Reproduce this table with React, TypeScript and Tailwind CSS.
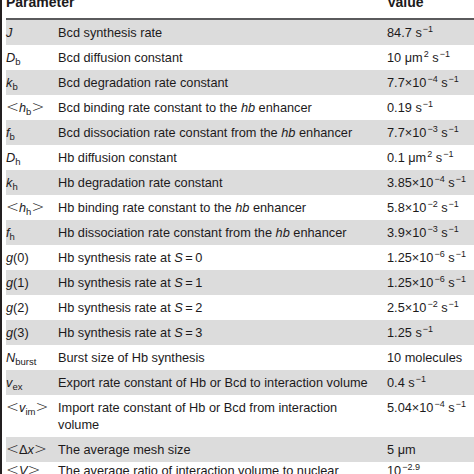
import React from "react";

const Sub = ({ children }: { children: React.ReactNode }) => (
  <span className="not-italic text-[9.5px] leading-[0] align-[-0.3em]">{children}</span>
);
const Sup = ({ children }: { children: React.ReactNode }) => (
  <span className="text-[9px] leading-[0] align-[0.6em] ml-[1px]">{children}</span>
);
const Lt = () => (
  <span className="font-['DejaVu_Sans',sans-serif] text-[15.5px] font-light not-italic leading-[0]">&lt;</span>
);
const Gt = () => (
  <span className="font-['DejaVu_Sans',sans-serif] text-[15.5px] font-light not-italic leading-[0]">&gt;</span>
);
const I = ({ children }: { children: React.ReactNode }) => <i className="italic">{children}</i>;

const sInv = (
  <>
    {" "}s<Sup>−1</Sup>
  </>
);
const pow = (base: string, exp: string) => (
  <>
    {base}×10<Sup>−{exp}</Sup>
    {sInv}
  </>
);

type Row = { sym: React.ReactNode; desc: React.ReactNode; val: React.ReactNode };

const rows: Row[] = [
  { sym: <I>J</I>, desc: "Bcd synthesis rate", val: <>84.7{sInv}</> },
  { sym: <><I>D</I><Sub>b</Sub></>, desc: "Bcd diffusion constant", val: <>10 μm<Sup>2</Sup>{sInv}</> },
  { sym: <><I>k</I><Sub>b</Sub></>, desc: "Bcd degradation rate constant", val: pow("7.7", "4") },
  {
    sym: <><Lt /><I>h</I><Sub>b</Sub><Gt /></>,
    desc: <>Bcd binding rate constant to the <I>hb</I> enhancer</>,
    val: <>0.19{sInv}</>,
  },
  {
    sym: <><I>f</I><Sub>b</Sub></>,
    desc: <>Bcd dissociation rate constant from the <I>hb</I> enhancer</>,
    val: pow("7.7", "3"),
  },
  { sym: <><I>D</I><Sub>h</Sub></>, desc: "Hb diffusion constant", val: <>0.1 μm<Sup>2</Sup>{sInv}</> },
  { sym: <><I>k</I><Sub>h</Sub></>, desc: "Hb degradation rate constant", val: pow("3.85", "4") },
  {
    sym: <><Lt /><I>h</I><Sub>h</Sub><Gt /></>,
    desc: <>Hb binding rate constant to the <I>hb</I> enhancer</>,
    val: pow("5.8", "2"),
  },
  {
    sym: <><I>f</I><Sub>h</Sub></>,
    desc: <>Hb dissociation rate constant from the <I>hb</I> enhancer</>,
    val: pow("3.9", "3"),
  },
  { sym: <><I>g</I>(0)</>, desc: <>Hb synthesis rate at <I>S</I>{"\u2009=\u2009"}0</>, val: pow("1.25", "6") },
  { sym: <><I>g</I>(1)</>, desc: <>Hb synthesis rate at <I>S</I>{"\u2009=\u2009"}1</>, val: pow("1.25", "6") },
  { sym: <><I>g</I>(2)</>, desc: <>Hb synthesis rate at <I>S</I>{"\u2009=\u2009"}2</>, val: pow("2.5", "2") },
  { sym: <><I>g</I>(3)</>, desc: <>Hb synthesis rate at <I>S</I>{"\u2009=\u2009"}3</>, val: <>1.25{sInv}</> },
  { sym: <><I>N</I><Sub>burst</Sub></>, desc: "Burst size of Hb synthesis", val: "10 molecules" },
  { sym: <><I>v</I><Sub>ex</Sub></>, desc: "Export rate constant of Hb or Bcd to interaction volume", val: <>0.4{sInv}</> },
  {
    sym: <><Lt /><I>v</I><Sub>im</Sub><Gt /></>,
    desc: "Import rate constant of Hb or Bcd from interaction volume",
    val: pow("5.04", "4"),
  },
  { sym: <><Lt />Δ<I>x</I><Gt /></>, desc: "The average mesh size", val: "5 μm" },
];

export default function App() {
  return (
    <div className="w-[474px] h-[474px] overflow-hidden bg-white border-l-2 border-[#231f20] pl-[4px] font-['Liberation_Sans',Arial,sans-serif] text-[#1c1a1b]">
      <div className="w-[520px]">
        <div className="h-[18px] flex font-bold text-[14px] leading-[17px]">
          <div className="w-[381px] -mt-[6px]">Parameter</div>
          <div className="-mt-[6px]">Value</div>
        </div>
        <div className="h-[2px] bg-[#5a5a5c]" />
        {rows.map((r, i) => (
          <div
            key={i}
            className={`flex text-[12.75px] leading-[17px] py-1 ${i % 2 === 0 ? "bg-[#dcdcdc]" : "bg-white"}`}
          >
            <div className="w-[52px] shrink-0 whitespace-nowrap">{r.sym}</div>
            <div className="w-[329px] shrink-0 pr-[11px]">{r.desc}</div>
            <div className="whitespace-nowrap">{r.val}</div>
          </div>
        ))}
        <div className="flex text-[12.75px] leading-[17px] pt-0 bg-white">
          <div className="w-[52px] shrink-0 whitespace-nowrap">
            <Lt />
            <I>V</I>
            <Gt />
          </div>
          <div className="w-[329px] shrink-0 pr-[11px]">The average ratio of interaction volume to nuclear volume</div>
          <div className="whitespace-nowrap">
            10<Sup>−2.9</Sup>
          </div>
        </div>
      </div>
    </div>
  );
}
